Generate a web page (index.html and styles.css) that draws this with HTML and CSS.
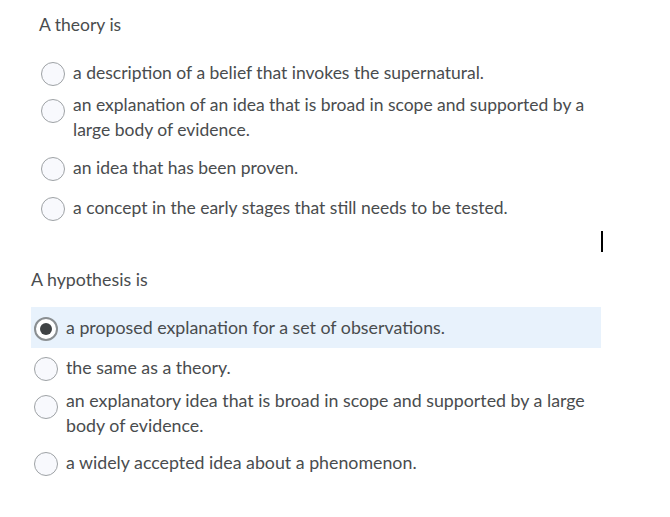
FILE: index.html
```html
<!DOCTYPE html>
<html>
<head>
<meta charset="utf-8">
<link rel="stylesheet" href="styles.css">
</head>
<body>
<div class="page">
  <section class="q q1">
    <p class="stem">A theory is</p>
    <div class="opts">
      <label class="opt"><span class="radio"></span><span class="txt">a description of a belief that invokes the supernatural.</span></label>
      <label class="opt multi"><span class="radio"></span><span class="txt">an explanation of an idea that is broad in scope and supported by a large body of evidence.</span></label>
      <label class="opt"><span class="radio"></span><span class="txt">an idea that has been proven.</span></label>
      <label class="opt"><span class="radio"></span><span class="txt">a concept in the early stages that still needs to be tested.</span></label>
    </div>
    <span class="caret"></span>
  </section>
  <section class="q q2">
    <p class="stem">A hypothesis is</p>
    <div class="opts">
      <label class="opt selected"><span class="radio checked"></span><span class="txt">a proposed explanation for a set of observations.</span></label>
      <label class="opt"><span class="radio"></span><span class="txt">the same as a theory.</span></label>
      <label class="opt multi"><span class="radio"></span><span class="txt">an explanatory idea that is broad in scope and supported by a large body of evidence.</span></label>
      <label class="opt"><span class="radio"></span><span class="txt">a widely accepted idea about a phenomenon.</span></label>
    </div>
  </section>
</div>
</body>
</html>
```
FILE: styles.css
```css
html, body {
  margin: 0;
  padding: 0;
  background: #ffffff;
}
body {
  font-family: Lato, "Open Sans", "Liberation Sans", sans-serif;
  font-size: 17.5px;
  line-height: 25px;
  color: #494c4e;
}
.page {
  width: 670px;
  height: 517px;
  padding-top: 12px;
  box-sizing: border-box;
  overflow: hidden;
}
.q {
  position: relative;
}
.q1 {
  margin-left: 39px;
  width: 562px;
}
.q2 {
  margin-left: 31px;
  width: 570px;
  margin-top: 39px;
  font-size: 17.8px;
}
.stem {
  margin: 0 0 15px 0;
}
.opts {
  display: flex;
  flex-direction: column;
}
.opt {
  display: flex;
  align-items: flex-start;
  gap: 8px;
  padding: 7.5px 0 7px;
}
.q1 .opt {
  padding-left: 2px;
}
.q2 .opt {
  padding-left: 3px;
}
.opt.multi {
  padding-bottom: 5px;
}
.opt.multi .txt {
  margin-top: -8px;
}
.opt.multi .radio {
  margin-top: -1px;
}
.opt.selected {
  background: #e8f2fc;
}
.radio {
  flex: none;
  width: 24px;
  height: 24px;
  margin-top: 2px;
  border: 1px solid #9ea2a5;
  border-radius: 50%;
  background: #f8f9fd;
  box-sizing: border-box;
  display: flex;
  align-items: center;
  justify-content: center;
}
.radio.checked {
  background: #ffffff;
  border: 2px solid #8a8f92;
}
.radio.checked::after {
  content: "";
  width: 12px;
  height: 12px;
  border-radius: 50%;
  background: #3f4244;
}
.caret {
  position: absolute;
  left: 562px;
  top: 219px;
  width: 1.5px;
  height: 21px;
  background: #000000;
}
```
